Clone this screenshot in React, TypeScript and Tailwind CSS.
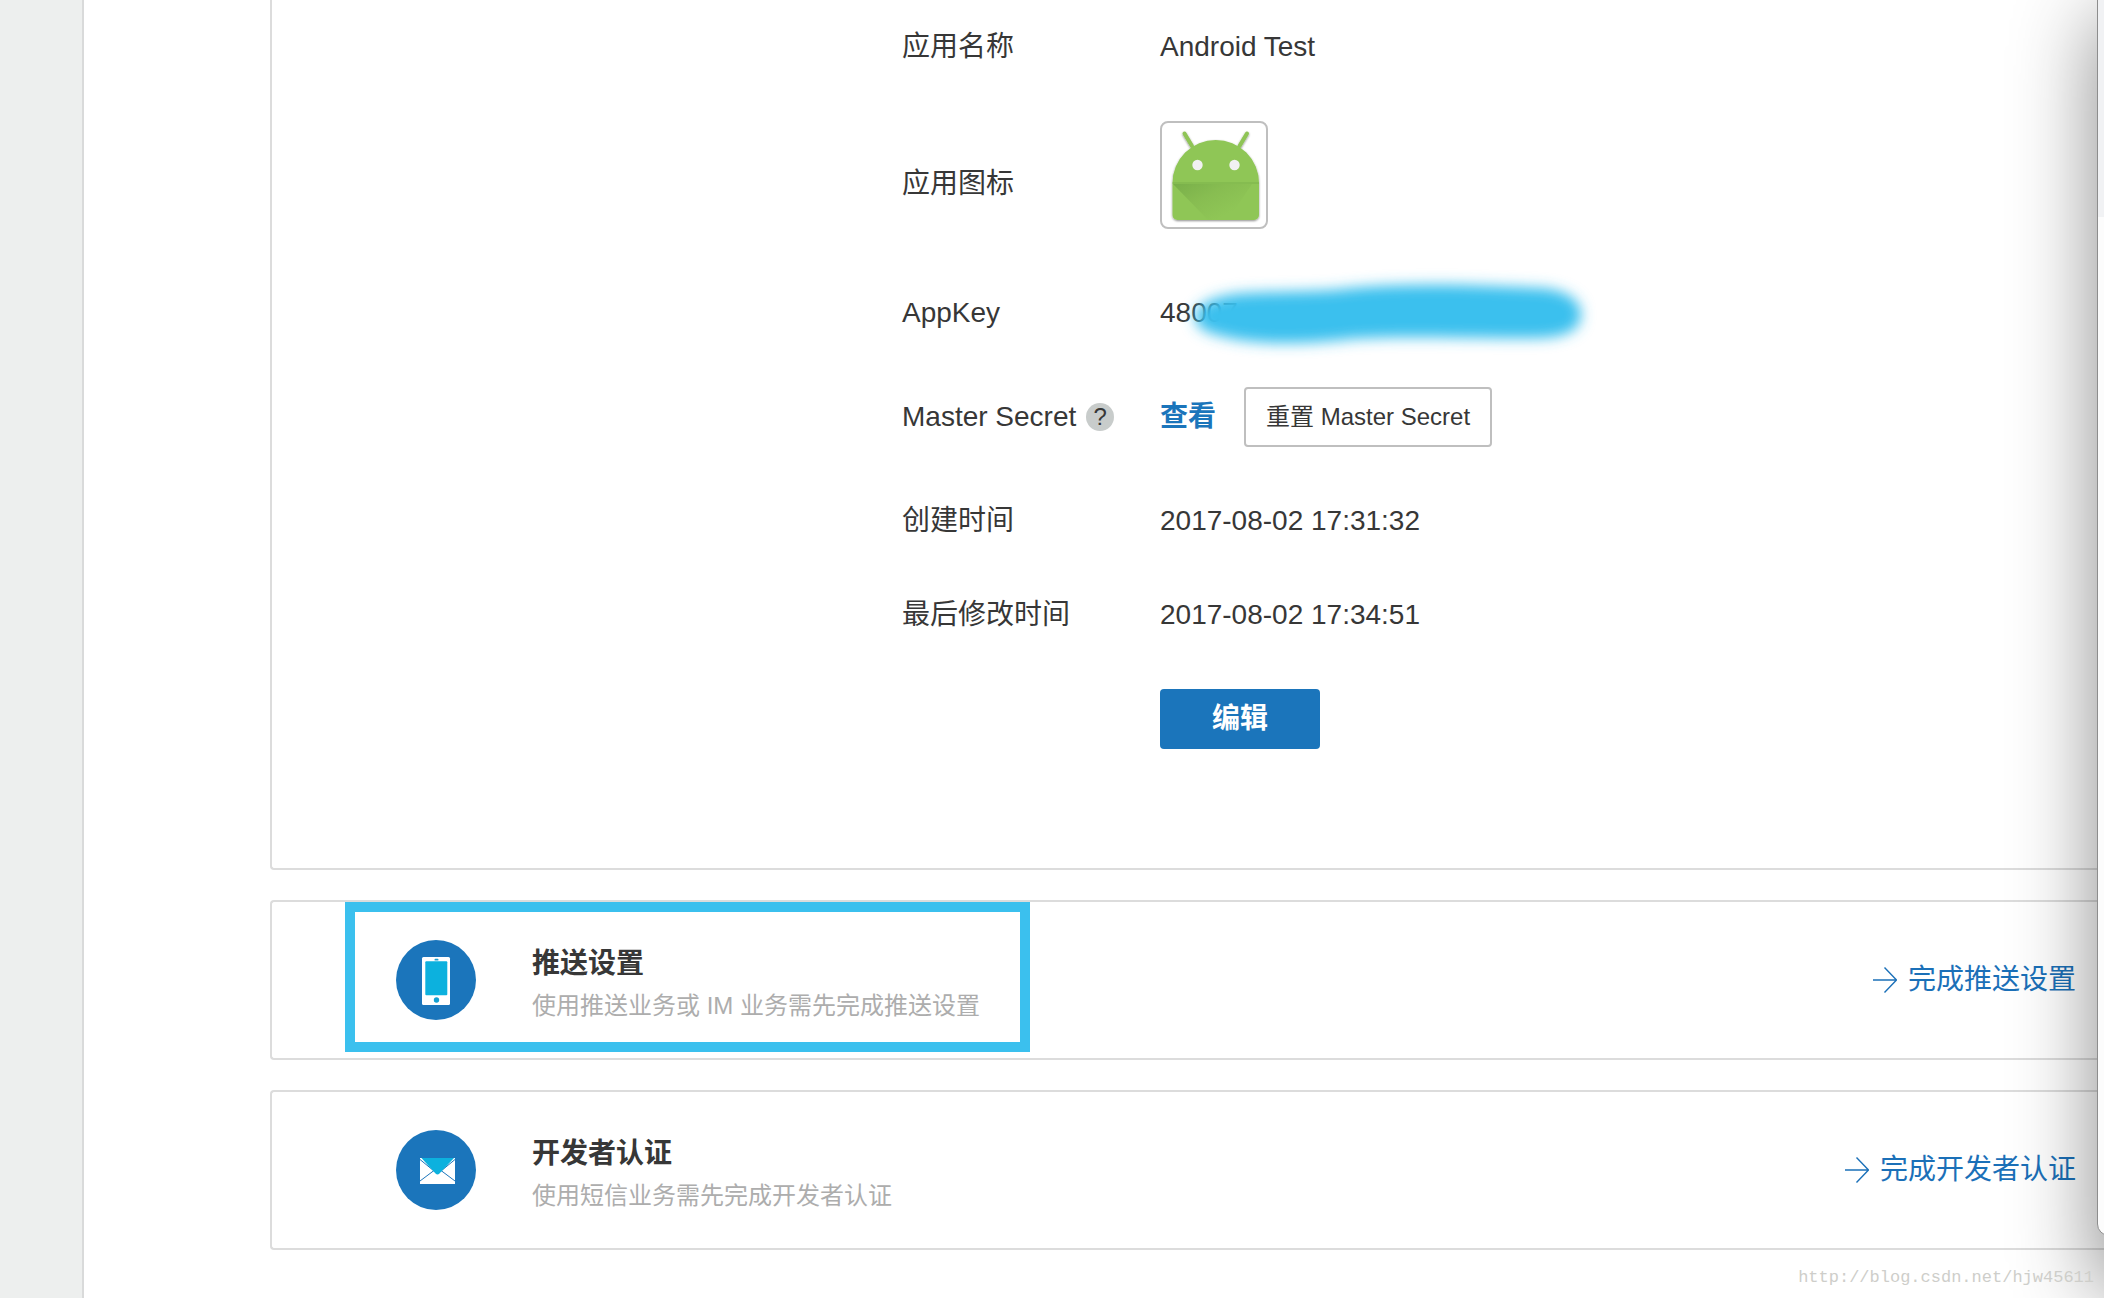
import type { ReactNode } from "react";

function AndroidIcon() {
  return (
    <svg viewBox="0 0 104 104" className="block h-full w-full" role="img" aria-label="Android Test">
      <defs>
        <linearGradient id="fold" x1="0" y1="0" x2="0.8" y2="0.7">
          <stop offset="0" stopColor="#6fa544" />
          <stop offset="0.5" stopColor="#84b94f" />
          <stop offset="1" stopColor="#8fc656" />
        </linearGradient>
        <filter id="drop" x="-10%" y="-10%" width="120%" height="125%">
          <feDropShadow dx="0" dy="1" stdDeviation="1" floodColor="#000" floodOpacity="0.45" />
        </filter>
      </defs>
      <g filter="url(#drop)">
        <path d="M22.5 10.5 30 23M85 10.5 77.5 23" stroke="#8fc456" strokeWidth="4" strokeLinecap="round" />
        <path d="M10.5 60A43.2 43 0 0 1 97 60V92a5 5 0 0 1-5 5H15.5a5 5 0 0 1-5-5Z" fill="#8fc656" />
      </g>
      <path d="M11 61H90L66 97H46Z" fill="url(#fold)" opacity="0.7" />
      <path d="M10.5 59.5H97V60.5H10.5Z" fill="#7db24b" />
      <circle cx="35.5" cy="42" r="5.2" fill="#f1f1f1" />
      <circle cx="72.5" cy="42" r="5.2" fill="#f1f1f1" />
    </svg>
  );
}

function PhoneIcon() {
  return (
    <svg viewBox="0 0 80 80" className="h-20 w-20 shrink-0" aria-hidden="true">
      <circle cx="40" cy="40" r="40" fill="#1b75bb" />
      <rect x="26" y="17" width="28" height="48" rx="1.5" fill="#fff" />
      <rect x="29.3" y="21.3" width="22" height="34" rx="1" fill="#0cb1de" />
      <rect x="38.5" y="18.8" width="4" height="1.8" rx="0.9" fill="#1b9fd2" />
      <circle cx="40.5" cy="60" r="2.7" fill="#14a0d2" />
    </svg>
  );
}

function MailIcon() {
  return (
    <svg viewBox="0 0 80 80" className="h-20 w-20 shrink-0" aria-hidden="true">
      <circle cx="40" cy="40" r="40" fill="#1b75bb" />
      <rect x="24" y="28" width="35" height="26" fill="#fff" />
      <path d="M24 51 38 40.5M59 51 45 40.5M24 29.5 38 41M59 29.5 45 41" stroke="#1b75bb" strokeWidth="1" />
      <path d="M25.5 28H58L43.5 43.5Q41.5 45.5 39.5 43.5Z" fill="#0cb1de" />
    </svg>
  );
}

function ArrowIcon() {
  return (
    <svg viewBox="0 0 24 28" className="h-7 w-6" fill="none" stroke="currentColor" strokeWidth="1.4" aria-hidden="true">
      <path d="M0 14H23.5M11.5 1.5 23.5 14 11.5 26.5" />
    </svg>
  );
}

// Brush stroke that hides the rest of the key
function Smear() {
  return (
    <svg
      viewBox="0 0 440 90"
      className="pointer-events-none absolute -left-5 -top-5 h-[90px] w-[440px] overflow-visible"
      aria-hidden="true"
    >
      <defs>
        <filter id="soft" x="-10%" y="-50%" width="120%" height="200%">
          <feGaussianBlur stdDeviation="7" />
        </filter>
      </defs>
      <path
        d="M55 44C55 30 80 21 108 20C150 18 185 19 212 15C280 9 350 13 400 15C427 17 441 27 441 42C441 56 427 64 400 65C340 66 260 62 210 66C170 71 120 72 90 65C70 61 55 56 55 44Z"
        fill="#3bc0ee"
        filter="url(#soft)"
      />
    </svg>
  );
}

function Row({ label, children }: { label: ReactNode; children: ReactNode }) {
  return (
    <div className="flex items-center">
      <dt className="flex w-[258px] shrink-0 items-center gap-2.5">{label}</dt>
      <dd className="flex items-center">{children}</dd>
    </div>
  );
}

type SetupCardProps = {
  icon: ReactNode;
  title: string;
  desc: string;
  action: string;
  marked?: boolean;
};

function SetupCard({ icon, title, desc, action, marked }: SetupCardProps) {
  return (
    <section className="relative flex h-40 items-center rounded-l border-2 border-r-0 border-[#dcdcdc] pl-31 pr-7">
      {marked && (
        <div className="pointer-events-none absolute left-[73px] top-0 h-[150px] w-[685px] border-10 border-[#3bc0ee]" />
      )}
      {icon}
      <div className="ml-14 pt-2">
        <h2 className="text-[28px] leading-11 font-bold">{title}</h2>
        <p className="text-2xl leading-10 text-[#adadad]">{desc}</p>
      </div>
      <a href="#" className="ml-auto flex items-center gap-[11px] text-[28px] leading-10 text-[#1b70b8]">
        <ArrowIcon />
        {action}
      </a>
    </section>
  );
}

export default function App() {
  return (
    <div className="relative flex min-h-screen overflow-hidden bg-white font-['Liberation_Sans','Noto_Sans_CJK_SC',sans-serif] text-[28px] leading-10 text-[#373737]">
      <aside className="w-21 shrink-0 border-r-2 border-[#d9dada] bg-[#edefee]" />

      <main className="flex grow flex-col gap-[30px] pb-12 pl-[186px]">
        <section className="rounded-bl border-b-2 border-l-2 border-[#dcdcdc] pb-[119px] pl-[630px] pt-[27px]">
          <dl className="flex flex-col gap-[54px]">
            <Row label="应用名称">Android Test</Row>
            <Row label={<span className="pt-2">应用图标</span>}>
              <div className="mb-2.5 h-27 w-27 rounded-lg border-2 border-[#bfbfbf]">
                <AndroidIcon />
              </div>
            </Row>
            <Row label="AppKey">
              <div className="relative">
                48007
                <Smear />
              </div>
            </Row>
            <Row
              label={
                <>
                  Master Secret
                  <button
                    type="button"
                    aria-label="Master Secret"
                    className="h-7 w-7 rounded-full bg-[#c8cccb] text-2xl leading-7"
                  >
                    ?
                  </button>
                </>
              }
            >
              <a href="#" className="font-bold text-[#1b75bb]">
                查看
              </a>
              <button type="button" className="ml-7 h-15 rounded border-2 border-[#bfbfbf] px-5 text-2xl">
                重置 Master Secret
              </button>
            </Row>
            <Row label="创建时间">2017-08-02 17:31:32</Row>
            <Row label="最后修改时间">2017-08-02 17:34:51</Row>
          </dl>
          <button
            type="button"
            className="ml-[258px] mt-[54px] block h-15 w-40 rounded bg-[#1b75bb] font-bold text-white"
          >
            编辑
          </button>
        </section>

        <SetupCard
          icon={<PhoneIcon />}
          title="推送设置"
          desc="使用推送业务或 IM 业务需先完成推送设置"
          action="完成推送设置"
          marked
        />
        <SetupCard
          icon={<MailIcon />}
          title="开发者认证"
          desc="使用短信业务需先完成开发者认证"
          action="完成开发者认证"
        />
      </main>

      {/* Neighbouring window lying over the right edge */}
      <div className="absolute -right-100 -top-10 h-[1276px] w-[407px] rounded-xl border border-[#8d8d8d] bg-[#fcfcfc] shadow-[0_56px_84px_rgba(0,0,0,0.46)]">
        <div className="h-64 rounded-t-xl bg-[#f1f2f4]" />
      </div>

      <p className="absolute bottom-2 right-2.5 font-['Liberation_Mono',monospace] text-[17px] leading-6 text-[#cececa]">
        http://blog.csdn.net/hjw45611
      </p>
    </div>
  );
}
